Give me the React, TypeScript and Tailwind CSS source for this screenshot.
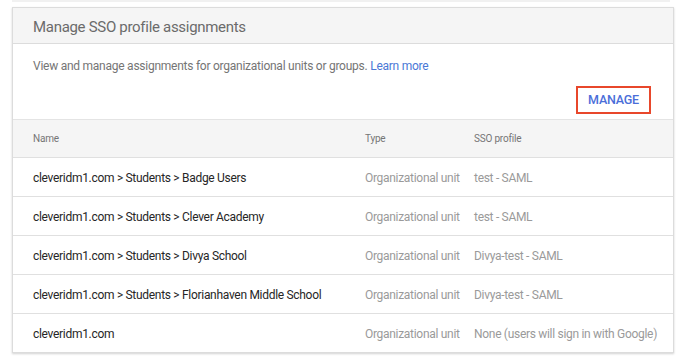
import React from "react";

const rows = [
  { name: "cleveridm1.com > Students > Badge Users", type: "Organizational unit", profile: "test - SAML" },
  { name: "cleveridm1.com > Students > Clever Academy", type: "Organizational unit", profile: "test - SAML" },
  { name: "cleveridm1.com > Students > Divya School", type: "Organizational unit", profile: "Divya-test - SAML" },
  { name: "cleveridm1.com > Students > Florianhaven Middle School", type: "Organizational unit", profile: "Divya-test - SAML" },
  { name: "cleveridm1.com", type: "Organizational unit", profile: "None (users will sign in with Google)" },
];

export default function App() {
  return (
    <div className="w-[682px] h-[358px] bg-white overflow-hidden font-['Roboto',sans-serif]">
      <div className="h-[2px] mx-[12px] bg-[#f1f1f1]" />
      <div className="ml-[12px] mt-[5px] w-[662px] border border-[#dcdcdc] bg-white shadow-[0_1px_2px_rgba(0,0,0,0.18)]">
        {/* header */}
        <div className="h-[36px] bg-[#f5f5f5] border-b border-[#dcdcdc] flex items-center pl-[20px] pt-[3px]">
          <span className="text-[15px] tracking-[-0.3px] text-[#6b6b6b] leading-none">Manage SSO profile assignments</span>
        </div>

        <div className="pl-[20px] pt-[14px] text-[12px] tracking-[-0.25px] text-[#757575] leading-[16px]">
          View and manage assignments for organizational units or groups.{" "}
          <span className="text-[#4a78d6]">Learn more</span>
        </div>

        <div className="flex justify-end pr-[22px] pt-[12px] pb-[5px]">
          <div className="w-[75px] h-[28px] border-2 border-[#e8472b] flex items-center justify-center">
            <span className="text-[12.5px] font-medium text-[#4a6ed9] tracking-[-0.2px]">MANAGE</span>
          </div>
        </div>

        {/* table */}
        <div className="h-[38px] bg-[#f5f5f5] border-t border-[#e4e4e4] flex items-center text-[10px] tracking-[-0.2px] text-[#757575]">
          <div className="w-[352px] shrink-0 pl-[20px]">Name</div>
          <div className="w-[109px] shrink-0">Type</div>
          <div>SSO profile</div>
        </div>
        {rows.map((r) => (
          <div key={r.name} className="h-[39px] border-t border-[#e0e0e0] flex items-center pt-[1px] text-[12px] tracking-[-0.3px]">
            <div className="w-[352px] shrink-0 pl-[20px] text-[#262626]">{r.name}</div>
            <div className="w-[109px] shrink-0 text-[#9a9a9a]">{r.type}</div>
            <div className="text-[#9a9a9a] whitespace-nowrap">{r.profile}</div>
          </div>
        ))}
      </div>
    </div>
  );
}
